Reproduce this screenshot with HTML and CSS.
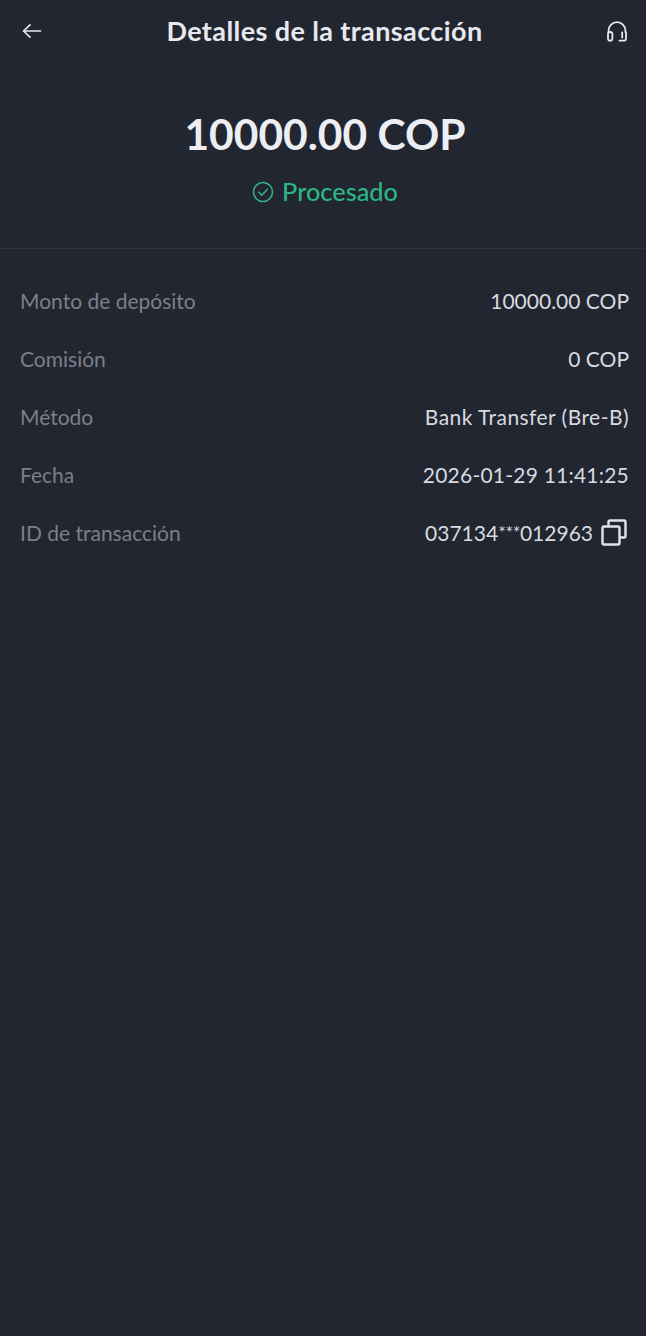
FILE: index.html
```html
<!DOCTYPE html>
<html lang="es">
<head>
<meta charset="utf-8">
<title>Detalles de la transacción</title>
<link rel="stylesheet" href="styles.css">
</head>
<body>
<header class="topbar">
  <svg class="icon-back" width="22" height="18" viewBox="0 0 22 18" fill="none" stroke="#e8e9ee" stroke-width="1.7" stroke-linecap="round" stroke-linejoin="round"><path d="M2.5 9H19.5M9 2.8 2.5 9 9 15.2"/></svg>
  <h1 class="title">Detalles de la transacción</h1>
  <svg class="icon-support" width="22" height="21" viewBox="0 0 22 21" fill="none" stroke="#e8e9ee" stroke-width="1.8" stroke-linecap="round" stroke-linejoin="round"><path d="M2.6 11V9.500a8.400 8.400 0 0 1 16.800 0V11"/><rect x="2" y="11" width="4.400" height="8.600" rx="2.200"/><path d="M20 11.500v5.900a2.200 2.200 0 0 1-2.200 2.200H13.500"/><path d="M16.200 11.500v5"/></svg>
</header>
<section class="summary">
  <div class="amount">10000.00 COP</div>
  <div class="status">
    <svg class="status-icon" width="22" height="22" viewBox="0 0 22 22" fill="none" stroke="#2cb585" stroke-width="1.6" stroke-linecap="round" stroke-linejoin="round"><circle cx="11" cy="11" r="9.500"/><path d="M6.800 11.200 9.800 14.200 15.400 8.300"/></svg>
    <span>Procesado</span>
  </div>
</section>
<section class="details">
  <div class="row"><span class="label">Monto de depósito</span><span class="value">10000.00 COP</span></div>
  <div class="row"><span class="label">Comisión</span><span class="value">0 COP</span></div>
  <div class="row"><span class="label">Método</span><span class="value wide">Bank Transfer (Bre-B)</span></div>
  <div class="row"><span class="label">Fecha</span><span class="value date">2026-01-29 11:41:25</span></div>
  <div class="row"><span class="label">ID de transacción</span><span class="value with-icon"><span>037134<span class="stars">***</span>012963</span>
    <svg width="27" height="27" viewBox="0 0 27 27" fill="none" stroke="#e3e4e9" stroke-width="2.400" stroke-linejoin="round"><rect x="2.500" y="7.500" width="17" height="18" rx="1.500"/><path d="M8.500 7.500V3A1.500 1.500 0 0 1 10 1.500H24A1.500 1.500 0 0 1 25.500 3V17A1.500 1.500 0 0 1 24 18.500H19.500"/></svg></span></div>
</section>
</body>
</html>
```
FILE: styles.css
```css
* { box-sizing: border-box; }
html, body { margin: 0; height: 100%; }
body {
  background: #222630;
  font-family: "Lato", "Open Sans", sans-serif;
  color: #e3e4e9;
}
.topbar {
  height: 62px;
  padding: 0 18px 0 21px;
  display: flex;
  align-items: center;
  justify-content: space-between;
}
.title {
  margin: 0 0 2px;
  font-size: 27px;
  letter-spacing: 0.4px;
  font-weight: 700;
  color: #e8e9ee;
}
.summary {
  height: 187px;
  border-bottom: 1px solid #2e323c;
  display: flex;
  flex-direction: column;
  align-items: center;
  padding: 44px 0 0 4px;
}
.amount {
  font-size: 42.5px;
  line-height: 56px;
  font-weight: 700;
  color: #eceef3;
}
.status {
  margin-top: 14px;
  display: flex;
  align-items: center;
  gap: 8px;
  font-size: 25.3px;
  line-height: 30px;
  font-weight: 500;
  color: #2cb585;
}
.status-icon { margin-top: 2px; }
.details {
  padding: 22px 17px 0 20px;
}
.row {
  height: 58px;
  display: flex;
  align-items: center;
  justify-content: space-between;
  font-size: 21px;
}
.label { color: #7c7f88; }
.value { color: #d9dae0; }
.wide { letter-spacing: 0.45px; }
.date { letter-spacing: 0.22px; }
.stars { font-size: 18px; letter-spacing: -0.4px; vertical-align: 2px; }
.with-icon {
  display: flex;
  align-items: center;
  gap: 7px;
  margin-right: 2px;
}
```
